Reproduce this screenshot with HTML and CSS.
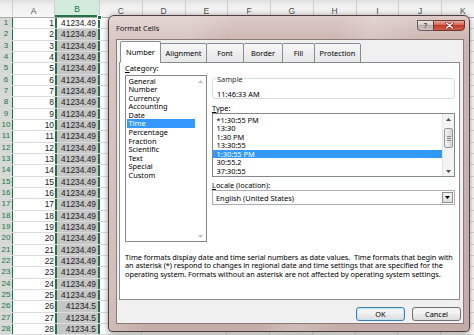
FILE: index.html
```html
<!DOCTYPE html>
<html lang="en">
<head>
  <meta charset="UTF-8" />
  <meta name="viewport" content="width=device-width, initial-scale=1.0"/>
  <title>Format Cells</title>

  <link rel="stylesheet" href="styles.css">
</head>
<body>

<main class="sheet">
  <div class="col-heads">
    <div class="corner"></div>
    <div class="ch-a">A</div>
    <div class="ch-b">B</div>
    <div class="ch">C</div>
    <div class="ch">D</div>
    <div class="ch">E</div>
    <div class="ch">F</div>
    <div class="ch">G</div>
    <div class="ch">H</div>
    <div class="ch">I</div>
    <div class="ch">J</div>
    <div class="ch">K</div>
  </div>

  <div class="row"><div class="rh">1</div><div class="ca">1</div><div class="cb active">41234.49</div></div>
  <div class="row"><div class="rh">2</div><div class="ca">2</div><div class="cb">41234.49</div></div>
  <div class="row"><div class="rh">3</div><div class="ca">3</div><div class="cb">41234.49</div></div>
  <div class="row"><div class="rh">4</div><div class="ca">4</div><div class="cb">41234.49</div></div>
  <div class="row"><div class="rh">5</div><div class="ca">5</div><div class="cb">41234.49</div></div>
  <div class="row"><div class="rh">6</div><div class="ca">6</div><div class="cb">41234.49</div></div>
  <div class="row"><div class="rh">7</div><div class="ca">7</div><div class="cb">41234.49</div></div>
  <div class="row"><div class="rh">8</div><div class="ca">8</div><div class="cb">41234.49</div></div>
  <div class="row"><div class="rh">9</div><div class="ca">9</div><div class="cb">41234.49</div></div>
  <div class="row"><div class="rh">10</div><div class="ca">10</div><div class="cb">41234.49</div></div>
  <div class="row"><div class="rh">11</div><div class="ca">11</div><div class="cb">41234.49</div></div>
  <div class="row"><div class="rh">12</div><div class="ca">12</div><div class="cb">41234.49</div></div>
  <div class="row"><div class="rh">13</div><div class="ca">13</div><div class="cb">41234.49</div></div>
  <div class="row"><div class="rh">14</div><div class="ca">14</div><div class="cb">41234.49</div></div>
  <div class="row"><div class="rh">15</div><div class="ca">15</div><div class="cb">41234.49</div></div>
  <div class="row"><div class="rh">16</div><div class="ca">16</div><div class="cb">41234.49</div></div>
  <div class="row"><div class="rh">17</div><div class="ca">17</div><div class="cb">41234.49</div></div>
  <div class="row"><div class="rh">18</div><div class="ca">18</div><div class="cb">41234.49</div></div>
  <div class="row"><div class="rh">19</div><div class="ca">19</div><div class="cb">41234.49</div></div>
  <div class="row"><div class="rh">20</div><div class="ca">20</div><div class="cb">41234.49</div></div>
  <div class="row"><div class="rh">21</div><div class="ca">21</div><div class="cb">41234.49</div></div>
  <div class="row"><div class="rh">22</div><div class="ca">22</div><div class="cb">41234.49</div></div>
  <div class="row"><div class="rh">23</div><div class="ca">23</div><div class="cb">41234.49</div></div>
  <div class="row"><div class="rh">24</div><div class="ca">24</div><div class="cb">41234.49</div></div>
  <div class="row"><div class="rh">25</div><div class="ca">25</div><div class="cb">41234.49</div></div>
  <div class="row"><div class="rh">26</div><div class="ca">26</div><div class="cb">41234.5</div></div>
  <div class="row"><div class="rh">27</div><div class="ca">27</div><div class="cb">41234.5</div></div>
  <div class="row"><div class="rh">28</div><div class="ca">28</div><div class="cb">41234.5</div></div>
</main>

<!-- Format Cells dialog -->
<div class="dialog">
  <div class="titlebar">
    <span class="title">Format Cells</span>
    <div class="caption">
      <div class="cap-help">?</div>
      <div class="cap-close">
        <svg width="9" height="7" viewBox="0 0 9 7"><path d="M1.5 1 L7.5 6 M7.5 1 L1.5 6" stroke="#5a2018" stroke-width="2.6" stroke-linecap="round"/><path d="M1.5 1 L7.5 6 M7.5 1 L1.5 6" stroke="#fff" stroke-width="1.5" stroke-linecap="round"/></svg>
      </div>
    </div>
  </div>

  <div class="client">
    <div class="tabs">
      <div class="tab on w-number">Number</div>
      <div class="tab w-align">Alignment</div>
      <div class="tab w-font">Font</div>
      <div class="tab w-border">Border</div>
      <div class="tab w-fill">Fill</div>
      <div class="tab w-prot">Protection</div>
    </div>

    <div class="panel">
      <div class="cols">
        <div class="cat">
          <div class="lbl"><u>C</u>ategory:</div>
          <div class="listbox cat-list">
            <div class="items">
              <div class="item">General</div>
              <div class="item">Number</div>
              <div class="item">Currency</div>
              <div class="item">Accounting</div>
              <div class="item">Date</div>
              <div class="item sel">Time</div>
              <div class="item">Percentage</div>
              <div class="item">Fraction</div>
              <div class="item">Scientific</div>
              <div class="item">Text</div>
              <div class="item">Special</div>
              <div class="item">Custom</div>
            </div>
            <div class="vscroll off">
              <div class="arrow"><svg width="5" height="3" viewBox="0 0 5 3"><path d="M0 3 L2.5 0 L5 3Z" fill="#c2c2c2"/></svg></div>
              <div class="track"></div>
              <div class="arrow"><svg width="5" height="3" viewBox="0 0 5 3"><path d="M0 0 L5 0 L2.5 3Z" fill="#c2c2c2"/></svg></div>
            </div>
          </div>
        </div>

        <div class="right">
          <div class="sample">
            <div class="legend">Sample</div>
            <div class="val">11:46:33 AM</div>
          </div>

          <div class="lbl type-lbl"><u>T</u>ype:</div>
          <div class="listbox type-list">
            <div class="items">
              <div class="item">*1:30:55 PM</div>
              <div class="item">13:30</div>
              <div class="item">1:30 PM</div>
              <div class="item">13:30:55</div>
              <div class="item sel">1:30:55 PM</div>
              <div class="item">30:55.2</div>
              <div class="item">37:30:55</div>
            </div>
            <div class="vscroll">
              <div class="arrow"><svg width="5" height="3" viewBox="0 0 5 3"><path d="M0 3 L2.5 0 L5 3Z" fill="#4d4d4d"/></svg></div>
              <div class="track"><div class="thumb"><i></i><i></i><i></i></div></div>
              <div class="arrow"><svg width="5" height="3" viewBox="0 0 5 3"><path d="M0 0 L5 0 L2.5 3Z" fill="#4d4d4d"/></svg></div>
            </div>
          </div>

          <div class="lbl loc-lbl"><u>L</u>ocale (location):</div>
          <div class="combo">
            <span class="combo-text">English (United States)</span>
            <span class="combo-btn"><svg width="5" height="3" viewBox="0 0 5 3"><path d="M0 0 L5 0 L2.5 3Z" fill="#000"/></svg></span>
          </div>
        </div>
      </div>

      <p class="desc">Time formats display date and time serial numbers as date values.&nbsp; Time formats that begin with<br>an asterisk (*) respond to changes in regional date and time settings that are specified for the<br>operating system. Formats without an asterisk are not affected by operating system settings.</p>
    </div>

    <div class="btnrow">
      <button class="btn default">OK</button>
      <button class="btn">Cancel</button>
    </div>
  </div>
</div>

</body>
</html>
```

FILE: styles.css
```css
body {
  margin: 0;
  width: 474px;
  height: 335px;
  overflow: hidden;
  position: relative;
  background: #fff;
  font-family: "Liberation Sans", Arial, sans-serif;
}

/* Sheet */
.col-heads {
  display: flex;
  height: 18px;
  box-sizing: border-box;
  background: linear-gradient(#dedede, #efefef 5px, #f7f7f7);
  border-bottom: 1px solid #ababab;
  font-size: 8.5px;
  color: #505050;
}

.col-heads > div {
  box-sizing: border-box;
  border-right: 1px solid #cfcfcf;
  display: flex;
  align-items: flex-end;
  justify-content: center;
  padding-bottom: 1px;
  flex-shrink: 0;
}

.corner { width: 13px; }
.ch-a { width: 42px; }
.ch-b {
  width: 45px;
  background: #d3ebdc;
  color: #217346;
  border-bottom: 2px solid #217346;
}
.ch { width: 42.75px; }

.row {
  display: flex;
  height: 11.33px;
  box-sizing: border-box;
  border-bottom: 1px solid #dcdcdc;
  font-size: 8.4px;
  line-height: 10px;
  color: #222;
  background: repeating-linear-gradient(90deg, transparent 0 12.5px, #dcdcdc 12.5px 13.5px, transparent 13.5px 42.75px);
}

.rh {
  width: 13px;
  flex-shrink: 0;
  box-sizing: border-box;
  border-right: 1px solid #217346;
  background: #d4d9d5;
  color: #217346;
  font-size: 8px;
  text-align: center;
}

.ca {
  width: 42px;
  flex-shrink: 0;
  box-sizing: border-box;
  background: #fff;
  text-align: right;
  padding-right: 1px;
}

.cb {
  width: 45px;
  flex-shrink: 0;
  box-sizing: border-box;
  border-left: 2px solid #217346;
  border-right: 2px solid #217346;
  background: #c6c6c6;
  text-align: right;
  padding-right: 2px;
}

.cb.active {
  background: #fff;
  position: relative;
}

.cb.active::after {
  content: "";
  position: absolute;
  top: -3px;
  right: -4px;
  width: 3px;
  height: 3px;
  background: #217346;
  border: 1px solid #fff;
}

/* Dialog */
.dialog {
  position: absolute;
  left: 108px;
  top: 15px;
  width: 362px;
  height: 317px;
  box-sizing: border-box;
  border: 1px solid #4f3f3c;
  border-radius: 6px 6px 4px 4px;
  background:
    linear-gradient(105deg, rgba(255,255,255,0.22) 0 18%, transparent 28% 52%, rgba(255,255,255,0.18) 60%, transparent 72%),
    linear-gradient(#ddcbc7, #cbb5b1 26px, #c3aca8);
  box-shadow: 0 1px 6px rgba(0, 0, 0, 0.45);
  padding: 0 5px 7px 7px;
  display: flex;
  flex-direction: column;
  font-family: "Noto Sans", "Open Sans", sans-serif;
  font-size: 7.4px;
  color: #000;
}

.titlebar {
  height: 23px;
  display: flex;
  align-items: flex-start;
  flex-shrink: 0;
}

.title {
  margin-top: 7.5px;
  line-height: 9px;
  color: #111;
}

.caption {
  margin-left: auto;
  margin-top: 4px;
  margin-right: -1px;
  display: flex;
}

.cap-help, .cap-close {
  height: 11px;
  box-sizing: border-box;
  display: flex;
  align-items: center;
  justify-content: center;
}

.cap-help {
  width: 16px;
  border: 1px solid #6f5d5a;
  border-right: none;
  border-radius: 0 0 0 4px;
  background: linear-gradient(#ece5e3, #d4c8c5 50%, #bcaeab 50%, #cdc1be);
  color: #3c3c3c;
  font-size: 7px;
  font-weight: bold;
  line-height: 9px;
  text-shadow: 0 0 1px #fff;
}

.cap-close {
  width: 32px;
  border: 1px solid #6b372f;
  border-radius: 0 0 4px 0;
  background: linear-gradient(#e9aa9e, #d5654f 45%, #c13f28 50%, #d35c45);
}

.client {
  flex: 1;
  border: 1px solid #8b7a77;
  background: #f0f0f0;
  display: flex;
  flex-direction: column;
  padding: 1px 3px 0 2px;
}

.tabs {
  display: flex;
  align-items: flex-end;
  height: 22px;
  margin-bottom: -1px;
  padding-left: 1px;
  position: relative;
  z-index: 1;
}

.tab {
  height: 20px;
  box-sizing: border-box;
  border: 1px solid #898c95;
  border-radius: 2px 2px 0 0;
  margin-right: -1px;
  background: linear-gradient(#f7f7f7, #e5e5e5);
  display: flex;
  align-items: center;
  justify-content: center;
}

.tab.on {
  height: 22px;
  background: #fff;
  border-bottom-color: #fff;
}

.w-number { width: 41px; }
.w-align { width: 47px; }
.w-font { width: 38px; }
.w-border { width: 40px; }
.w-fill { width: 33px; }
.w-prot { width: 47px; }

.panel {
  height: 238px;
  box-sizing: border-box;
  border: 1px solid #898c95;
  background: #fff;
  padding: 1px 4px 0 5px;
}

.cols {
  display: flex;
  gap: 5px;
}

.cat { width: 82px; }
.right { flex: 1; }

.lbl {
  height: 9px;
  line-height: 9px;
}

.listbox {
  box-sizing: border-box;
  border: 1px solid #828790;
  display: flex;
}

.cat-list {
  margin-top: 2px;
  height: 167px;
}

.items {
  flex: 1;
  padding: 0.5px 0 0 1px;
}

.item {
  height: 8.6px;
  line-height: 8.6px;
  padding-left: 1.5px;
  white-space: nowrap;
}

.item.sel {
  background: #3399ff;
  color: #fff;
}

.vscroll {
  width: 11px;
  display: flex;
  flex-direction: column;
}

.vscroll .arrow {
  height: 10px;
  display: flex;
  align-items: center;
  justify-content: center;
}

.vscroll .track { flex: 1; }

.type-list .vscroll {
  background: #f3f3f3;
  border-left: 1px solid #e6e6e6;
}

.thumb {
  margin: 4px 1px 0;
  height: 20px;
  box-sizing: border-box;
  border: 1px solid #979797;
  border-radius: 2px;
  background: linear-gradient(90deg, #f3f3f3, #e2e2e2 50%, #d6d6d6);
  display: flex;
  flex-direction: column;
  align-items: center;
  justify-content: center;
  gap: 1px;
}

.thumb i {
  display: block;
  width: 4px;
  height: 1px;
  background: #8a8a8a;
}

.sample {
  margin-top: 14px;
  height: 21px;
  box-sizing: border-box;
  border: 1px solid #d5dfe5;
  border-radius: 3px;
  padding-left: 3px;
}

.sample .legend {
  margin-top: -4.5px;
  line-height: 9px;
  width: fit-content;
  padding: 0 1px;
  background: #fff;
  color: #333;
}

.sample .val {
  margin-top: 6px;
  line-height: 9px;
  padding-left: 1px;
}

.type-lbl { margin-top: 4.5px; }

.type-list {
  margin-top: 0.5px;
  height: 64px;
}

.type-list .items { padding: 1.5px 0 0 0; }
.type-list .item { height: 8.5px; line-height: 8.5px; padding-left: 3.5px; }

.loc-lbl { margin-top: 3.5px; }

.combo {
  margin-top: 0.5px;
  height: 15px;
  box-sizing: border-box;
  border: 1px solid #abadb3;
  display: flex;
  align-items: center;
  padding-left: 3px;
}

.combo-text { flex: 1; }

.combo-btn {
  width: 11px;
  height: 11px;
  margin-right: 1px;
  box-sizing: border-box;
  border: 1px solid #8e8f8f;
  background: linear-gradient(#f4f4f4, #dcdcdc);
  display: flex;
  align-items: center;
  justify-content: center;
}

.desc {
  margin: 10.7px 0 0;
  line-height: 8.6px;
  letter-spacing: -0.07px;
  white-space: nowrap;
}

.btnrow {
  display: flex;
  justify-content: flex-end;
  gap: 7px;
  margin-top: 7px;
  margin-right: -1px;
}

.btn {
  width: 49px;
  height: 14px;
  padding: 0;
  box-sizing: border-box;
  border: 1px solid #707070;
  border-radius: 3px;
  background: linear-gradient(#f2f2f2 50%, #ebebeb 50%, #dddddd);
  font: inherit;
  color: #000;
}

.btn.default {
  border-color: #3c7fb1;
  box-shadow: inset 0 0 0 1px #bfe6f8;
}
```
